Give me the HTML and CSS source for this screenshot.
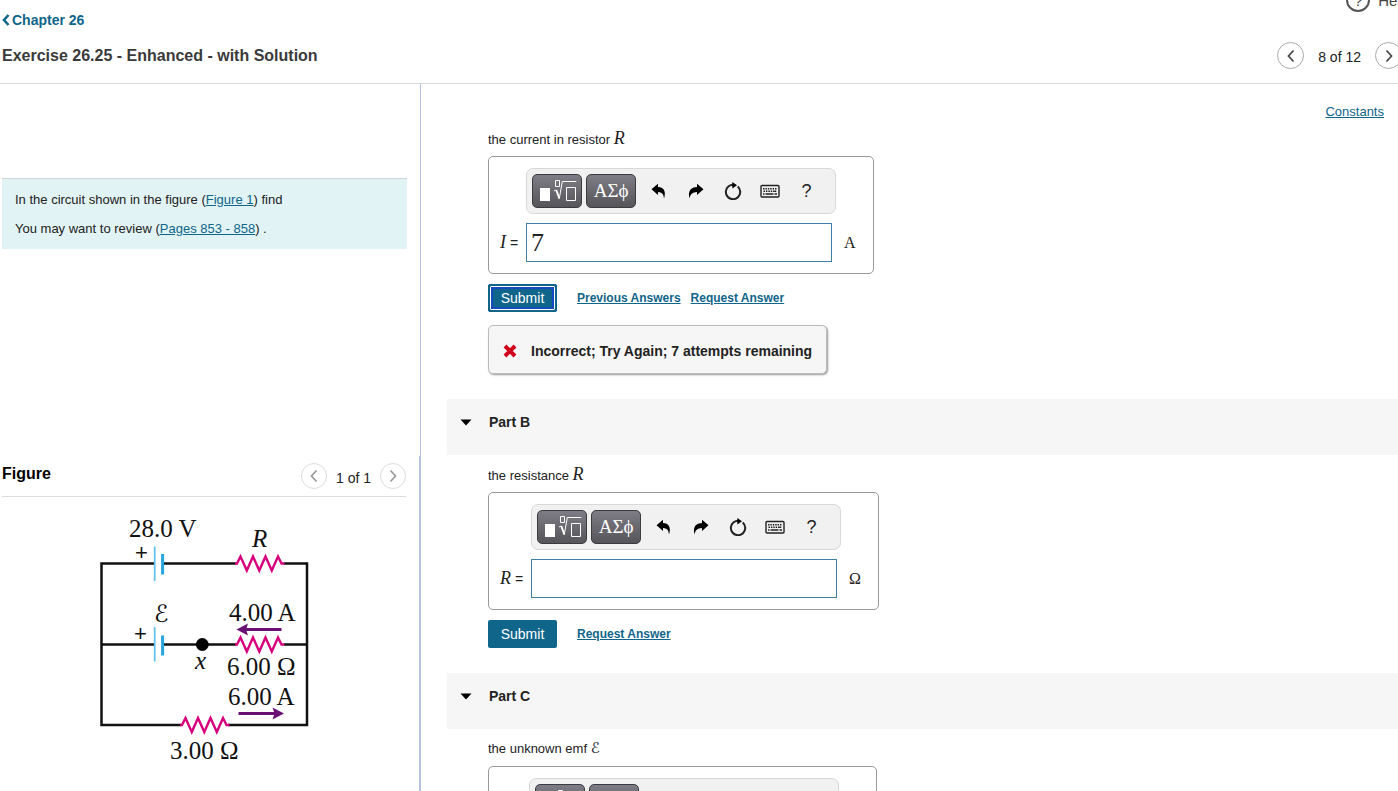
FILE: index.html
```html
<!DOCTYPE html>
<html lang="en">
<head>
<meta charset="UTF-8" />
<meta name="viewport" content="width=device-width, initial-scale=1" />
<title>Exercise 26.25 - Enhanced - with Solution</title>
<link rel="stylesheet" href="styles.css">
</head>
<body>

<!-- shared icons -->
<svg class="sprite" aria-hidden="true">
  <symbol id="i-template" viewBox="0 0 40 24">
    <rect x="3" y="9" width="10" height="13" fill="#fff"/>
    <path d="M18.500 1.500h4v6h-4zM17 12l2.300-1 3 8.500 3-17h14M29.500 8.500h9v13h-9z" fill="none" stroke="#fff" stroke-width="1"/>
    <path d="M19.300 11l3 8.500" stroke="#fff" stroke-width="1.800"/>
  </symbol>
  <symbol id="i-undo" viewBox="0 0 16 16">
    <path d="M0.500 6.300 7 0.800v3.100c5.500 0.300 8.500 4 6 11.600-0.300-4.400-2-6.500-6-6.600v3.200z"/>
  </symbol>
  <symbol id="i-redo" viewBox="0 0 16 16">
    <path d="M15.500 6.300 9 0.800v3.100c-6 0.300-9.500 4-7.500 11.600 0.800-4.400 3-6.500 7.500-6.600v3.200z"/>
  </symbol>
  <symbol id="i-reset" viewBox="0 0 18 18">
    <path d="M4.600 4.300A7.200 7.200 0 1 0 13.700 4.500M4.600 4.300Q6.500 2.900 9.500 2.800" fill="none" stroke="#222" stroke-width="2"/>
    <path d="M8.300 0 13 3.200 8.300 6.600z"/>
  </symbol>
  <symbol id="i-keyboard" viewBox="0 0 20 14">
    <rect x="1" y="1.500" width="18" height="11.500" rx="1" fill="none" stroke="#222" stroke-width="1.400"/>
    <path d="M3 4.700h14M3.500 7.200h12M15.500 6.500v2.500" stroke="#222" stroke-width="1.500" stroke-dasharray="1.500 0.900" fill="none"/>
    <path d="M3 10h1.500M5.500 10h8M14.500 10h2.500" stroke="#222" stroke-width="1.500" fill="none"/>
  </symbol>
  <symbol id="i-left" viewBox="0 0 10 14"><path d="M7.500 1.500 2.500 7l5 5.500" fill="none" stroke="currentColor" stroke-width="1.700"/></symbol>
  <symbol id="i-right" viewBox="0 0 10 14"><path d="m2.500 1.500 5 5.500-5 5.500" fill="none" stroke="currentColor" stroke-width="1.700"/></symbol>
</svg>

<header class="page-header">
  <div class="header-top">
    <a class="back-link" href="#"><svg width="8" height="12" viewBox="0 0 8 12"><path d="M6.500 1 2 6l4.500 5" fill="none" stroke="currentColor" stroke-width="2.600"/></svg>Chapter 26</a>
    <a class="help-link" href="#"><span class="help-icon">?</span>Help</a>
  </div>
  <div class="header-main">
    <h1>Exercise 26.25 - Enhanced - with Solution</h1>
    <nav class="pager" aria-label="Exercises">
      <button class="round" aria-label="Previous item"><svg width="10" height="14"><use href="#i-left"/></svg></button>
      <span>8 of 12</span>
      <button class="round" aria-label="Next item"><svg width="10" height="14"><use href="#i-right"/></svg></button>
    </nav>
  </div>
</header>

<div class="columns">

  <aside class="side">
    <section class="side-top">
      <div class="intro">
        <p>In the circuit shown in the figure (<a href="#figure">Figure 1</a>) find</p>
        <p>You may want to review (<a href="#">Pages 853 - 858</a>) .</p>
      </div>
    </section>

    <section class="figure-panel" id="figure">
      <div class="figure-head">
        <h2>Figure</h2>
        <nav class="pager small" aria-label="Figures">
          <button class="round" aria-label="Previous figure" disabled><svg width="10" height="14"><use href="#i-left"/></svg></button>
          <span>1 of 1</span>
          <button class="round" aria-label="Next figure" disabled><svg width="10" height="14"><use href="#i-right"/></svg></button>
        </nav>
      </div>
      <svg class="circuit" width="230" height="260" viewBox="89 510 230 260" role="img" aria-label="Circuit with two batteries and three resistors">
        <defs>
          <path id="resistor" d="M0 0h2l3.500-7 6.300 14 6.200-14 6.300 14 6.200-14 6.300 14 6.200-14 3.500 7h3" fill="none" stroke="#d6007d" stroke-width="2.400"/>
        </defs>
        <!-- wires -->
        <g fill="none" stroke="#111" stroke-width="2.500">
          <path d="M154 563.500H101.500V725H181M228 725H307V563.500H284M163 563.500h73"/>
          <path d="M101.500 644.500H154M163 644.500h73M284 644.500h23"/>
        </g>
        <!-- batteries -->
        <g stroke="#5cc0ea" stroke-width="1.700">
          <path d="M154.700 546.500v34.500M154.700 627v34.500"/>
          <path d="M162.600 554v20.500M162.600 635.500v20" stroke="#27a6dd" stroke-width="3"/>
        </g>
        <use href="#resistor" x="235" y="563.500"/>
        <use href="#resistor" x="235" y="644.500"/>
        <use href="#resistor" x="180" y="725"/>
        <circle cx="202.300" cy="644.500" r="6.400" fill="#000"/>
        <!-- current arrows -->
        <g fill="#6a0f73">
          <path d="M236.500 629.500 248 623.500l-1.500 4.500H281.500v3H246.500l1.500 4.500z"/>
          <path d="M284 713.500 272.500 707.500l1.500 4.500H238.500v3H274l-1.500 4.500z"/>
        </g>
        <g class="circuit-text">
          <text x="129" y="537">28.0 V</text>
          <text x="252" y="547" class="it">R</text>
          <text x="154" y="622" class="emf">ℰ</text>
          <text x="229" y="621">4.00 A</text>
          <text x="195" y="669" class="it">x</text>
          <text x="227" y="675">6.00 Ω</text>
          <text x="228" y="705">6.00 A</text>
          <text x="170" y="759">3.00 Ω</text>
          <text x="135" y="560" class="plus">+</text>
          <text x="134" y="641" class="plus">+</text>
        </g>
      </svg>
    </section>
  </aside>

  <main class="content">
    <div class="constants"><a href="#">Constants</a></div>

    <section class="part">
      <p class="prompt">the current in resistor <i class="math">R</i></p>
      <div class="answer">
        <div class="toolbar">
          <button class="dark" aria-label="Templates"><svg width="40" height="24"><use href="#i-template"/></svg></button>
          <button class="dark">ΑΣϕ</button>
          <div class="tools">
            <button aria-label="Undo"><svg width="16" height="16"><use href="#i-undo"/></svg></button>
            <button aria-label="Redo"><svg width="16" height="16"><use href="#i-redo"/></svg></button>
            <button aria-label="Reset"><svg width="18" height="18"><use href="#i-reset"/></svg></button>
            <button aria-label="Keyboard shortcuts"><svg width="20" height="14"><use href="#i-keyboard"/></svg></button>
            <button>?</button>
          </div>
        </div>
        <label for="answer-a"><i class="math">I</i> =</label>
        <input type="text" id="answer-a" value="7">
        <span class="unit">A</span>
      </div>
      <div class="actions">
        <button class="submit focused">Submit</button>
        <a href="#">Previous Answers</a>
        <a href="#">Request Answer</a>
      </div>
      <div class="feedback">
        <svg width="14" height="14" viewBox="0 0 14 14"><path d="M2 2l10 10M12 2 2 12" stroke="#d0021b" stroke-width="4"/></svg>
        Incorrect; Try Again; 7 attempts remaining
      </div>
    </section>

    <h2 class="part-title"><button><svg width="12" height="7" viewBox="0 0 12 7"><path d="M0.500 0.500h11L6 6.500z"/></svg>Part B</button></h2>
    <section class="part">
      <p class="prompt">the resistance <i class="math">R</i></p>
      <div class="answer">
        <div class="toolbar">
          <button class="dark" aria-label="Templates"><svg width="40" height="24"><use href="#i-template"/></svg></button>
          <button class="dark">ΑΣϕ</button>
          <div class="tools">
            <button aria-label="Undo"><svg width="16" height="16"><use href="#i-undo"/></svg></button>
            <button aria-label="Redo"><svg width="16" height="16"><use href="#i-redo"/></svg></button>
            <button aria-label="Reset"><svg width="18" height="18"><use href="#i-reset"/></svg></button>
            <button aria-label="Keyboard shortcuts"><svg width="20" height="14"><use href="#i-keyboard"/></svg></button>
            <button>?</button>
          </div>
        </div>
        <label for="answer-b"><i class="math">R</i> =</label>
        <input type="text" id="answer-b">
        <span class="unit">Ω</span>
      </div>
      <div class="actions">
        <button class="submit">Submit</button>
        <a href="#">Request Answer</a>
      </div>
    </section>

    <h2 class="part-title"><button><svg width="12" height="7" viewBox="0 0 12 7"><path d="M0.500 0.500h11L6 6.500z"/></svg>Part C</button></h2>
    <section class="part">
      <p class="prompt">the unknown emf <span class="emf">ℰ</span></p>
      <div class="answer">
        <div class="toolbar">
          <button class="dark" aria-label="Templates"><svg width="40" height="24"><use href="#i-template"/></svg></button>
          <button class="dark" aria-label="Greek letters"></button>
        </div>
        <label for="answer-c"><span class="emf">ℰ</span> =</label>
        <input type="text" id="answer-c">
        <span class="unit">V</span>
      </div>
    </section>
  </main>

</div>

</body>
</html>
```
FILE: styles.css
```css
* {
  box-sizing: border-box;
}
body {
  margin: 0;
  height: 100vh;
  display: flex;
  flex-direction: column;
  overflow: hidden;
  background: #fff;
  color: #222;
  font-family: "Liberation Sans", Arial, sans-serif;
  font-size: 13px;
}
h1, h2, p {
  margin: 0;
}
a {
  color: #0f658a;
}
button {
  font-family: inherit;
  color: inherit;
  padding: 0;
  border: none;
  background: none;
  cursor: pointer;
}
.sprite {
  display: none;
}

/* Header */
.page-header {
  flex: none;
  padding: 0 0 11px 2px;
  border-bottom: 1px solid #d9d9d9;
}
.header-top, .header-main {
  display: flex;
  justify-content: space-between;
  align-items: center;
}
.header-top {
  height: 39px;
}
.header-main {
  height: 33px;
  margin-right: -4px;
}
.back-link {
  display: flex;
  align-items: center;
  gap: 2px;
  font-size: 14px;
  font-weight: bold;
  text-decoration: none;
}
.help-link {
  align-self: flex-start;
  display: flex;
  align-items: center;
  gap: 8px;
  margin: -12px -11px 0 0;
  color: #444;
  font-size: 15px;
  text-decoration: none;
}
.help-icon {
  width: 24px;
  height: 24px;
  border: 2px solid #555;
  border-radius: 50%;
  line-height: 22px;
  text-align: center;
}
h1 {
  font-size: 16px;
  color: #3a3a3a;
}
.pager {
  display: flex;
  align-items: center;
  gap: 14px;
  font-size: 14px;
}
.pager span {
  padding-top: 3px;
}
.round {
  display: flex;
  align-items: center;
  justify-content: center;
  width: 27px;
  height: 27px;
  border: 1px solid #aaa;
  border-radius: 50%;
  color: #444;
}

/* Columns */
.columns {
  flex: 1;
  min-height: 0;
  display: grid;
  grid-template-columns: 421px 1fr;
  grid-template-rows: 100%;
}
.side {
  display: grid;
  grid-template-rows: minmax(0, 10fr) minmax(0, 9fr);
}
.side-top {
  padding: 94px 13px 0 2px;
  border-right: 1px solid #b4bfdc;
}
.intro {
  padding: 6px 13px;
  border-top: 1px solid #ccd6d6;
  background: #e1f3f4;
  line-height: 29px;
}
.figure-panel {
  padding: 0 13px 0 2px;
  border-right: 2px solid #b4c3da;
}
.figure-head {
  display: flex;
  justify-content: space-between;
  align-items: center;
  height: 41px;
  border-bottom: 1px solid #ddd;
}
.figure-head h2 {
  font-size: 16px;
  color: #000;
  padding-bottom: 4px;
}
.small {
  gap: 9px;
}
.small .round {
  width: 26px;
  height: 26px;
  border-color: #ddd;
  color: #999;
}
.circuit {
  display: block;
  margin: 13px auto 0;
}
.circuit-text {
  font-family: "Liberation Serif", serif;
  font-size: 25px;
  fill: #111;
}
.circuit-text .emf {
  font-size: 24px;
}
.it {
  font-style: italic;
}
.plus {
  font-family: "Liberation Sans", sans-serif;
  font-size: 22px;
}

/* Content */
.content {
  min-height: 0;
  padding-left: 26px;
  overflow: hidden;
}
.constants {
  height: 35px;
  padding: 20px 14px 0 0;
  text-align: right;
  line-height: 15px;
}
.part {
  padding: 0 0 25px 41px;
}
.prompt {
  height: 37px;
  padding-top: 8px;
  line-height: 22px;
}
.math {
  font-family: "Liberation Serif", serif;
  font-size: 18px;
}
.emf {
  font-family: "DejaVu Serif", "DejaVu Sans", serif;
  font-size: 15px;
  font-style: italic;
}
.answer {
  display: grid;
  grid-template-columns: auto 310px auto;
  column-gap: 8px;
  row-gap: 9px;
  align-items: center;
  width: max-content;
  padding: 11px 17px 11px 11px;
  border: 1px solid #999;
  border-radius: 5px;
}
.toolbar {
  grid-column: 2;
  display: flex;
  align-items: center;
  gap: 4px;
  height: 46px;
  padding: 0 5px;
  border: 1px solid #d8d8d8;
  border-radius: 7px;
  background: #f1f1f1;
}
.dark {
  display: flex;
  align-items: center;
  justify-content: center;
  width: 50px;
  height: 34px;
  border: 1px solid #3c3c40;
  border-radius: 5px;
  background: linear-gradient(#7e7d85, #55555a);
  color: #fff;
  font-family: "Liberation Serif", serif;
  font-size: 19px;
}
.tools {
  display: flex;
}
.tools button {
  display: flex;
  align-items: center;
  justify-content: center;
  width: 37px;
  height: 34px;
  font-size: 18px;
}
.answer label {
  grid-column: 1;
  font-size: 14px;
  white-space: nowrap;
}
.answer input {
  width: 306px;
  height: 39px;
  padding: 0 4px;
  border: 1px solid #3f7f9f;
  outline: none;
  color: #222;
  font-family: "Liberation Serif", serif;
  font-size: 26px;
}
.unit {
  font-family: "Liberation Serif", serif;
  font-size: 16px;
}
.actions {
  display: flex;
  align-items: center;
  gap: 10px;
  margin-top: 10px;
  font-size: 12px;
  font-weight: bold;
}
.submit {
  width: 69px;
  height: 28px;
  margin-right: 10px;
  border-radius: 2px;
  background: #0f658a;
  color: #fff;
  font-size: 14px;
}
.submit.focused {
  outline: 1px solid #fff;
  outline-offset: -3px;
  border-radius: 3px;
  box-shadow: inset 0 0 0 2px #0f658a, inset 0 0 0 5px #1449bf;
}
.feedback {
  display: flex;
  align-items: center;
  gap: 14px;
  width: max-content;
  height: 49px;
  margin-top: 13px;
  padding: 2px 14px 0;
  border: 1px solid #bbb;
  border-radius: 5px;
  background: #f6f6f6;
  box-shadow: 1px 1px 2px #999;
  font-size: 14px;
  font-weight: bold;
}
.part-title {
  height: 56px;
  padding: 15px 13px;
  background: #f6f6f6;
  font-size: 14px;
  line-height: 17px;
}
.part-title button {
  display: flex;
  align-items: center;
  gap: 17px;
  font-size: 14px;
  font-weight: bold;
  line-height: 17px;
}
```
